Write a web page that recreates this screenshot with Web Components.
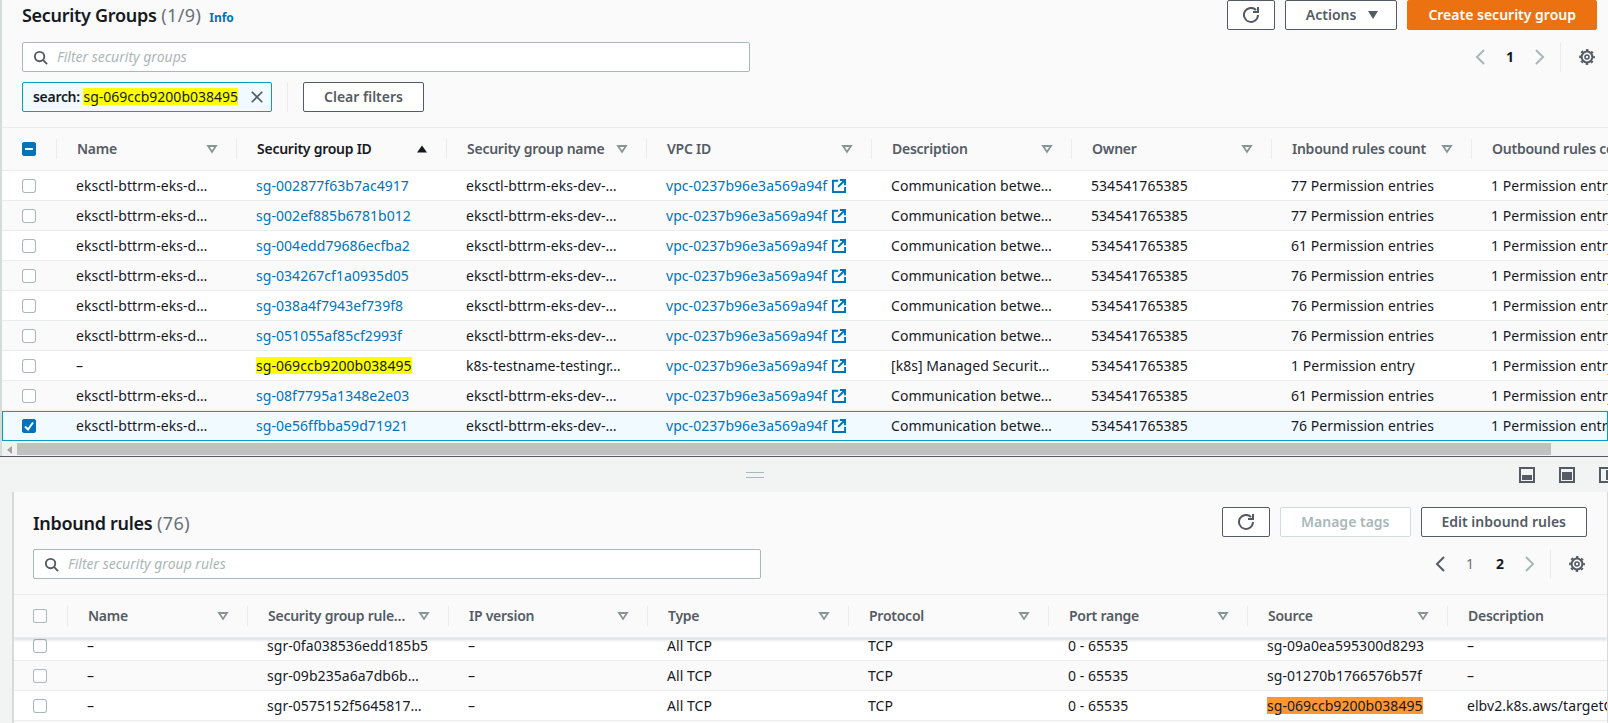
<!DOCTYPE html>
<html>
<head>
<meta charset="utf-8">
<title>Security Groups</title>
<style>
    html, body { margin: 0; height: 723px; overflow: hidden; }
    body {
        display: flex;
        flex-direction: column;
        background: #f2f3f3;
        color: #16191f;
        font: 14px/20px "Noto Sans", "Liberation Sans", sans-serif;
    }
    b { font-weight: 600; letter-spacing: -.3px; }
    .name { letter-spacing: -.3px; }
    .count { font-weight: 400; color: #687078; letter-spacing: .4px; }
    .info { font-size: 12px; font-weight: 700; color: #0073bb; margin-left: 8px; letter-spacing: 0; }
    .divider { width: 1px; height: 30px; background: #eaeded; margin: 0 15px; }
    mark { background: #ff0; color: #16191f; display: inline-block; line-height: 17px; }
</style>
</head>
<body>

<aws-section id="top" style="--pad-l: 20px; --pad-r: 11px; --pad-t: 0px; border-left: 2px solid #d5dbdb">
    <span slot="title"><span class="name">Security Groups</span> <span class="count">(1/9)</span><span class="info">Info</span></span>
    <aws-button slot="actions" style="padding: 0 15px"><aws-icon name="refresh"></aws-icon></aws-button>
    <aws-button slot="actions" style="padding-right: 15px">Actions<aws-icon name="caret" style="margin-left: 9px"></aws-icon></aws-button>
    <aws-button slot="actions" variant="primary">Create security group</aws-button>
    <aws-filter slot="filter" placeholder="Filter security groups"></aws-filter>
    <aws-pager slot="pager" pages="1" current="1"></aws-pager>
    <div slot="chips" style="display: flex; align-items: center; margin-top: 10px">
        <aws-chip><b>search:</b> <mark>sg-069ccb9200b038495</mark></aws-chip>
        <div class="divider"></div>
        <aws-button>Clear filters</aws-button>
    </div>
    <aws-table slot="table" id="groups"></aws-table>
    <aws-scrollbar slot="table"></aws-scrollbar>
</aws-section>

<aws-split-bar></aws-split-bar>

<aws-section id="bottom" style="--pad-l: 19px; --pad-r: 20px; --pad-t: 15px; flex: 1; min-height: 0; margin-left: 12px; margin-right: 0; border-left: 2px solid #d5dbdb; border-right: 1px solid #d5dbdb">
    <span slot="title"><span class="name">Inbound rules</span> <span class="count">(76)</span></span>
    <aws-button slot="actions" style="padding: 0 15px"><aws-icon name="refresh"></aws-icon></aws-button>
    <aws-button slot="actions" variant="disabled">Manage tags</aws-button>
    <aws-button slot="actions">Edit inbound rules</aws-button>
    <aws-filter slot="filter" placeholder="Filter security group rules"></aws-filter>
    <aws-pager slot="pager" pages="2" current="2"></aws-pager>
    <aws-table slot="table" id="rules"></aws-table>
</aws-section>

<script>
// ICONS

const ICONS = {
    refresh: '<path d="M10 5h5V0" fill="none" stroke="currentColor" stroke-width="2"/><path d="M15 8a7 7 0 1 1-2-5" fill="none" stroke="currentColor" stroke-width="2"/>',
    caret: '<path d="M3 4h10l-5 8z" fill="currentColor"/>',
    sortUp: '<path d="M3 11.5h10L8 4.5z" fill="currentColor"/>',
    filterDown: '<path d="M4 5h8l-4 6z" fill="none" stroke="currentColor" stroke-width="1.8" stroke-linejoin="miter"/>',
    search: '<circle cx="7" cy="7" r="5" fill="none" stroke="currentColor" stroke-width="2"/><path d="M10.6 10.6 15 15" stroke="currentColor" stroke-width="2"/>',
    close: '<path d="M2 2l12 12M14 2 2 14" stroke="currentColor" stroke-width="2"/>',
    left: '<path d="M12 1 5 8l7 7" fill="none" stroke="currentColor" stroke-width="2"/>',
    right: '<path d="M4 1l7 7-7 7" fill="none" stroke="currentColor" stroke-width="2"/>',
    gear: '<circle cx="8" cy="8" r="5.4" fill="none" stroke="currentColor" stroke-width="2"/><circle cx="8" cy="8" r="7" fill="none" stroke="currentColor" stroke-width="1.8" stroke-dasharray="2.6 2.9" stroke-dashoffset="1.3"/><circle cx="8" cy="8" r="2" fill="none" stroke="currentColor" stroke-width="1.6"/>',
    external: '<path d="M15 9v6H1V2h6" fill="none" stroke="currentColor" stroke-width="2.3"/><path d="M9 1.2h5.8V7M14.8 1.2 7 9" fill="none" stroke="currentColor" stroke-width="2.3"/>',
    panelBottom: '<rect x="1" y="1" width="14" height="14" fill="none" stroke="currentColor" stroke-width="2"/><rect x="3" y="8" width="10" height="5" fill="currentColor"/>',
    panelFull: '<rect x="1" y="1" width="14" height="14" fill="none" stroke="currentColor" stroke-width="2"/><rect x="3" y="5" width="10" height="8" fill="currentColor"/>',
    panelSide: '<rect x="1" y="1" width="14" height="14" fill="none" stroke="currentColor" stroke-width="2"/><rect x="7" y="3" width="6" height="10" fill="currentColor"/>',
};

class AwsIcon extends HTMLElement {
    connectedCallback() {
        if (this.shadowRoot) return;
        const size = this.getAttribute("size") || 16;
        this.attachShadow({ mode: "open" }).innerHTML = `
            <style>:host { display: inline-flex; flex: none; }</style>
            <svg width="${size}" height="${size}" viewBox="0 0 16 16">${ICONS[this.getAttribute("name")]}</svg>
        `;
    }
}
customElements.define("aws-icon", AwsIcon);

// CONTROLS

class AwsButton extends HTMLElement {
    constructor() {
        super();
        this.attachShadow({ mode: "open" }).innerHTML = `
            <style>
                :host {
                    display: inline-flex;
                    align-items: center;
                    box-sizing: border-box;
                    height: 30px;
                    padding: 0 20px;
                    border: 1px solid #545b64;
                    border-radius: 2px;
                    background: #fff;
                    color: #545b64;
                    font-weight: 600;
                    white-space: nowrap;
                }
                :host([variant="primary"]) { background: #ec7211; border-color: #ec7211; color: #fff; }
                :host([variant="disabled"]) { border-color: #d5dbdb; color: #aab7b8; }
            </style>
            <slot></slot>
        `;
    }
}
customElements.define("aws-button", AwsButton);

class AwsFilter extends HTMLElement {
    connectedCallback() {
        if (this.shadowRoot) return;
        this.attachShadow({ mode: "open" }).innerHTML = `
            <style>
                :host {
                    display: flex;
                    align-items: center;
                    box-sizing: border-box;
                    width: 728px;
                    height: 30px;
                    padding-left: 10px;
                    gap: 9px;
                    border: 1px solid #aab7b8;
                    border-radius: 2px;
                    background: #fff;
                    color: #545b64;
                }
                span { color: #aab7b8; font-style: italic; }
            </style>
            <aws-icon name="search" size="15"></aws-icon>
            <span>${this.getAttribute("placeholder")}</span>
        `;
    }
}
customElements.define("aws-filter", AwsFilter);

class AwsChip extends HTMLElement {
    constructor() {
        super();
        this.attachShadow({ mode: "open" }).innerHTML = `
            <style>
                :host {
                    display: inline-flex;
                    align-items: center;
                    box-sizing: border-box;
                    width: 250px;
                    height: 30px;
                    padding: 0 7px 0 10px;
                    justify-content: space-between;
                    border: 1px solid #00a1c9;
                    border-radius: 2px;
                    background: #f1faff;
                    white-space: nowrap;
                }
                aws-icon { color: #545b64; }
            </style>
            <span><slot></slot></span>
            <aws-icon name="close" size="14"></aws-icon>
        `;
    }
}
customElements.define("aws-chip", AwsChip);

class AwsPager extends HTMLElement {
    connectedCallback() {
        if (this.shadowRoot) return;
        const pages = Number(this.getAttribute("pages"));
        const current = Number(this.getAttribute("current"));
        const numbers = Array.from({ length: pages }, (_, i) =>
            `<span class="cell page ${i + 1 === current ? "on" : ""}">${i + 1}</span>`
        ).join("");
        this.attachShadow({ mode: "open" }).innerHTML = `
            <style>
                :host { display: flex; align-items: center; height: 30px; padding-right: 2px; color: #545b64; }
                .cell { display: inline-flex; justify-content: center; width: 30px; }
                .page { color: #687078; }
                .on { color: #16191f; font-weight: 700; }
                .off { color: #aab7b8; }
                .sep { width: 1px; height: 30px; background: #eaeded; margin: 0 18px 0 5px; }
            </style>
            <span class="cell ${current > 1 ? "" : "off"}"><aws-icon name="left"></aws-icon></span>
            ${numbers}
            <span class="cell ${current < pages ? "" : "off"}"><aws-icon name="right"></aws-icon></span>
            <span class="sep"></span>
            <aws-icon name="gear"></aws-icon>
        `;
    }
}
customElements.define("aws-pager", AwsPager);

class AwsCheckbox extends HTMLElement {
    connectedCallback() {
        if (this.shadowRoot) return;
        const state = this.getAttribute("state");
        const glyph = {
            checked: '<path d="M3 7.5 6 10.5 11 3.5" fill="none" stroke="#fff" stroke-width="2"/>',
            mixed: '<path d="M3 7h8" stroke="#fff" stroke-width="2"/>',
        }[state] || "";
        const on = state === "checked" || state === "mixed";
        this.attachShadow({ mode: "open" }).innerHTML = `
            <style>
                :host { display: inline-flex; flex: none; width: 14px; height: 14px; }
                svg { display: block; border-radius: 3px; box-sizing: border-box; background: ${on ? "#0073bb" : "#fff"}; box-shadow: inset 0 0 0 1px ${on ? "#0073bb" : "#aab7b8"}; }
            </style>
            <svg width="14" height="14" viewBox="0 0 14 14">${glyph}</svg>
        `;
    }
}
customElements.define("aws-checkbox", AwsCheckbox);

// TABLE

function esc(text) {
    return String(text).replace(/&/g, "&amp;").replace(/</g, "&lt;");
}

function renderCell(cell) {
    if (typeof cell === "string") return esc(cell);
    let inner = esc(cell.text);
    if (cell.mark) inner = `<mark class="${cell.mark}">${inner}</mark>`;
    if (cell.link) inner = `<span class="link">${inner}</span>`;
    if (cell.external) inner += `<aws-icon class="ext" name="external" size="14"></aws-icon>`;
    return inner;
}

class AwsTable extends HTMLElement {
    render({ columns, rows, widths, checkPad, rowOffset, headState }) {
        const grid = widths.map(w => w + "px").join(" ");
        const head = columns.map(col => `
            <div class="th ${col.sort ? "sorted" : ""}">
                <span>${esc(col.label)}</span>
                <aws-icon class="${col.sort ? "sort" : "filter"}" name="${col.sort ? "sortUp" : "filterDown"}"></aws-icon>
            </div>
        `).join("");
        const body = rows.map(row => `
            <div class="tr ${row.selected ? "selected" : ""}">
                <div class="td check"><aws-checkbox ${row.selected ? 'state="checked"' : ""}></aws-checkbox></div>
                ${row.cells.map(cell => `<div class="td">${renderCell(cell)}</div>`).join("")}
            </div>
        `).join("");
        this.shadowRoot.innerHTML = `
            <style>
                :host { display: block; flex: none; overflow: hidden; --grid: ${grid}; --check: ${checkPad}px; }
                .thead, .tr { display: grid; grid-template-columns: var(--grid); }
                .thead {
                    position: relative;
                    z-index: 1;
                    height: 44px;
                    box-sizing: border-box;
                    border-top: 1px solid #eaeded;
                    border-bottom: 1px solid #eaeded;
                    background: #fafafa;
                    box-shadow: ${rowOffset ? "0 2px 3px rgba(0, 28, 36, .15)" : "none"};
                }
                .th {
                    display: flex;
                    align-items: center;
                    justify-content: space-between;
                    min-width: 0;
                    margin: 11px 0;
                    padding: 0 16px 0 20px;
                    border-left: 1px solid #eaeded;
                    color: #545b64;
                    font-weight: 600;
                    letter-spacing: -.25px;
                    white-space: nowrap;
                }
                .th.first { border-left: 0; margin: 0; padding: 0 0 0 var(--check); }
                .th.sorted { color: #16191f; }
                .filter { color: #879596; }
                .sort { color: #16191f; }
                .tbody { overflow: hidden; }
                .tbody > .tr:first-child { margin-top: ${-rowOffset}px; }
                .tr { height: 30px; box-sizing: border-box; border-bottom: 1px solid #eaeded; background: #fff; }
                .tr:nth-child(even) { background: #fafafa; }
                .tr.selected { background: #f1faff; outline: 1px solid #00a1c9; outline-offset: -1px; }
                .td {
                    display: flex;
                    align-items: center;
                    min-width: 0;
                    padding-left: 20px;
                    letter-spacing: .05px;
                    white-space: nowrap;
                    overflow: hidden;
                }
                .td.check { padding-left: var(--check); }
                .link { color: #0073bb; }
                .ext { color: #0073bb; margin-left: 5px; }
                mark { background: #ff0; color: #16191f; line-height: 17px; }
                mark.orange { background: #ff9632; }
            </style>
            <div class="thead">
                <div class="th first"><aws-checkbox state="${headState}"></aws-checkbox></div>
                ${head}
            </div>
            <div class="tbody">${body}</div>
        `;
    }
    constructor() {
        super();
        this.attachShadow({ mode: "open" });
    }
}
customElements.define("aws-table", AwsTable);

class AwsScrollbar extends HTMLElement {
    constructor() {
        super();
        this.attachShadow({ mode: "open" }).innerHTML = `
            <style>
                :host { display: flex; flex: none; height: 13px; margin-top: 2px; background: #f1f1f1; }
                .arrow { display: flex; align-items: center; justify-content: center; width: 15px; }
                .arrow i { border: 4px solid transparent; border-right: 5px solid #a3a3a3; border-left: 0; }
                .thumb { width: 1534px; height: 12px; background: #c1c1c1; }
            </style>
            <div class="arrow"><i></i></div>
            <div class="thumb"></div>
        `;
    }
}
customElements.define("aws-scrollbar", AwsScrollbar);

// LAYOUT

class AwsSection extends HTMLElement {
    constructor() {
        super();
        this.attachShadow({ mode: "open" }).innerHTML = `
            <style>
                :host {
                    display: flex;
                    flex-direction: column;
                    flex: none;
                    overflow: hidden;
                    background: #fafafa;
                }
                .head { padding: var(--pad-t) var(--pad-r) 0 var(--pad-l); }
                .bar { display: flex; align-items: center; justify-content: space-between; height: 30px; }
                .title { font-size: 18px; font-weight: 600; line-height: 24px; white-space: nowrap; margin-top: 2px; }
                .actions { display: flex; gap: 10px; }
                .tools { display: flex; justify-content: space-between; margin-top: 12px; }
                .space { height: 15px; }
                .table { display: flex; flex-direction: column; min-height: 0; }
            </style>
            <div class="head">
                <div class="bar">
                    <div class="title"><slot name="title"></slot></div>
                    <div class="actions"><slot name="actions"></slot></div>
                </div>
                <div class="tools"><slot name="filter"></slot><slot name="pager"></slot></div>
                <slot name="chips"></slot>
                <div class="space"></div>
            </div>
            <div class="table"><slot name="table"></slot></div>
        `;
    }
}
customElements.define("aws-section", AwsSection);

class AwsSplitBar extends HTMLElement {
    constructor() {
        super();
        this.attachShadow({ mode: "open" }).innerHTML = `
            <style>
                :host {
                    display: grid;
                    flex: none;
                    grid-template-columns: 746px 18px 1fr;
                    align-items: center;
                    box-sizing: border-box;
                    height: 36px;
                    border-top: 1px solid #545b64;
                    overflow: hidden;
                    color: #545b64;
                }
                .handle { height: 4px; border-top: 1px solid #aab7b8; border-bottom: 1px solid #aab7b8; }
                .views { display: flex; justify-content: flex-end; gap: 24px; margin-right: -7px; }
            </style>
            <span></span>
            <div class="handle"></div>
            <div class="views">
                <aws-icon name="panelBottom"></aws-icon>
                <aws-icon name="panelFull"></aws-icon>
                <aws-icon name="panelSide"></aws-icon>
            </div>
        `;
    }
}
customElements.define("aws-split-bar", AwsSplitBar);

// DATA

const NAME = "eksctl-bttrm-eks-d…";
const GROUP = "eksctl-bttrm-eks-dev-…";
const DESC = "Communication betwe…";
const OWNER = "534541765385";
const VPC = { text: "vpc-0237b96e3a569a94f", link: true, external: true };
const OUT = "1 Permission entry";

const groupRow = (id, count, extra = {}) => ({
    selected: extra.selected,
    cells: [
        extra.name || NAME,
        extra.mark ? { text: id, mark: "yellow" } : { text: id, link: true },
        extra.group || GROUP,
        VPC,
        extra.desc || DESC,
        OWNER,
        count,
        OUT,
    ],
});

document.getElementById("groups").render({
    widths: [54, 180, 210, 200, 225, 200, 200, 200, 200],
    checkPad: 20,
    rowOffset: 0,
    headState: "mixed",
    columns: [
        { label: "Name" },
        { label: "Security group ID", sort: true },
        { label: "Security group name" },
        { label: "VPC ID" },
        { label: "Description" },
        { label: "Owner" },
        { label: "Inbound rules count" },
        { label: "Outbound rules count" },
    ],
    rows: [
        groupRow("sg-002877f63b7ac4917", "77 Permission entries"),
        groupRow("sg-002ef885b6781b012", "77 Permission entries"),
        groupRow("sg-004edd79686ecfba2", "61 Permission entries"),
        groupRow("sg-034267cf1a0935d05", "76 Permission entries"),
        groupRow("sg-038a4f7943ef739f8", "76 Permission entries"),
        groupRow("sg-051055af85cf2993f", "76 Permission entries"),
        groupRow("sg-069ccb9200b038495", "1 Permission entry", {
            name: "–",
            mark: true,
            group: "k8s-testname-testingr…",
            desc: "[k8s] Managed Securit…",
        }),
        groupRow("sg-08f7795a1348e2e03", "61 Permission entries"),
        groupRow("sg-0e56ffbba59d71921", "76 Permission entries", { selected: true }),
    ],
});

const ruleRow = (id, source, desc) => ({
    cells: ["–", id, "–", "All TCP", "TCP", "0 - 65535", source, desc],
});

document.getElementById("rules").render({
    widths: [53, 180, 201, 199, 201, 200, 199, 200, 200],
    checkPad: 19,
    rowOffset: 7,
    headState: "",
    columns: [
        { label: "Name" },
        { label: "Security group rule…" },
        { label: "IP version" },
        { label: "Type" },
        { label: "Protocol" },
        { label: "Port range" },
        { label: "Source" },
        { label: "Description" },
    ],
    rows: [
        ruleRow("sgr-0fa038536edd185b5", "sg-09a0ea595300d8293", "–"),
        ruleRow("sgr-09b235a6a7db6b…", "sg-01270b1766576b57f", "–"),
        ruleRow("sgr-0575152f5645817…", { text: "sg-069ccb9200b038495", mark: "orange" }, "elbv2.k8s.aws/targetGroupBinding=shared"),
        { cells: ["", "", "", "", "", "", "", ""] },
    ],
});
</script>
</body>
</html>
